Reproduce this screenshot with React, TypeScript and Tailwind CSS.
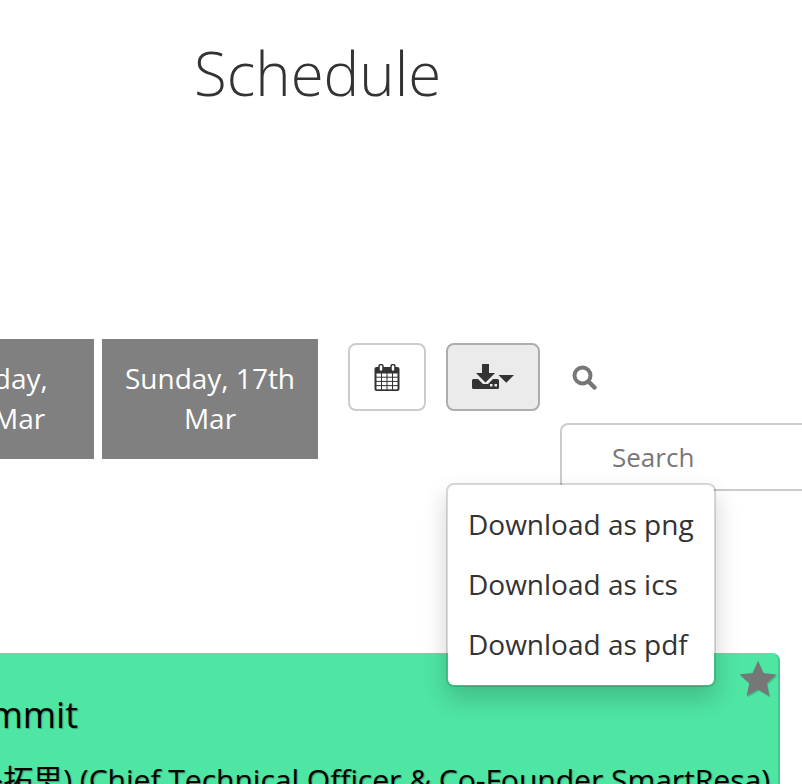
function CalendarIcon() {
    return (
        <svg width="26" height="27" viewBox="0 0 26 27" className="text-[#333]">
            <rect x="0.5" y="3" width="25" height="24" rx="2" fill="currentColor" />
            <rect x="5" y="0.5" width="4" height="7" rx="2" fill="#fff" stroke="currentColor" strokeWidth="1.5" />
            <rect x="17" y="0.5" width="4" height="7" rx="2" fill="#fff" stroke="currentColor" strokeWidth="1.5" />
            <g fill="#fff">
                {[0, 1, 2, 3].map((row) =>
                    [0, 1, 2, 3].map((col) => (
                        <rect key={`${row}-${col}`} x={2.5 + col * 5.5} y={9.5 + row * 4.2} width="4.5" height="3.2" />
                    )),
                )}
            </g>
        </svg>
    );
}

function DownloadIcon() {
    return (
        <svg width="42" height="26" viewBox="0 0 42 26" className="text-[#333]">
            <path d="M10 0h7v9h6l-9.5 9.5L4 9h6z" fill="currentColor" />
            <path d="M0 16.5a1.5 1.5 0 0 1 1.5-1.5H6l5 5h5l5-5h4.5a1.5 1.5 0 0 1 1.5 1.5v7a1.5 1.5 0 0 1-1.5 1.5h-24A1.5 1.5 0 0 1 0 23.5z" fill="currentColor" />
            <rect x="18" y="20" width="2.5" height="2.5" fill="#ebebeb" />
            <rect x="22.5" y="20" width="2.5" height="2.5" fill="#ebebeb" />
            <path d="M26.5 11h15.5l-7.75 7.75z" fill="currentColor" />
        </svg>
    );
}

function SearchIcon() {
    return (
        <svg width="25" height="25" viewBox="0 0 25 25" className="ml-[32px] text-[#777]" fill="none" stroke="currentColor">
            <circle cx="10.5" cy="10.5" r="8" strokeWidth="4" />
            <path d="M16.5 16.5l6 6" strokeWidth="4.5" strokeLinecap="round" />
        </svg>
    );
}

function StarIcon() {
    return (
        <svg width="38" height="37" viewBox="0 0 38 37" className="absolute top-[661px] left-[740px]">
            <path d="M18 0l5.400 12 13 1.400-9.700 8.800 2.700 12.800L18 28.500 6.600 35l2.700-12.800L-.4 13.400l13-1.400z" transform="translate(1 1.500)" fill="#3dbf88" />
            <path d="M18 0l5.400 12 13 1.400-9.700 8.800 2.700 12.800L18 28.500 6.600 35l2.700-12.800L-.4 13.400l13-1.400z" fill="#777" />
        </svg>
    );
}

export default function App() {
    return (
        <div className="relative h-[784px] overflow-hidden bg-white text-[#333]" style={{ fontFamily: "'Open Sans', 'Noto Sans CJK SC', sans-serif" }}>
            {/* Title */}
            <h1 className="pl-[194px] pt-[32px] text-[60px] leading-[82px] font-light">Schedule</h1>

            {/* Day tabs and toolbar */}
            <div className="mt-[225px] ml-[-122px] flex items-start gap-[8px]">
                <div className="flex h-[120px] w-[216px] shrink-0 items-center justify-center bg-[#808080] px-4 pb-[2px] text-center text-[28px] leading-[40px] text-white">
                    Saturday, 16th Mar
                </div>
                <div className="flex h-[120px] w-[216px] shrink-0 items-center justify-center bg-[#808080] px-4 pb-[2px] text-center text-[28px] leading-[40px] text-white">
                    Sunday, 17th Mar
                </div>
                <div className="ml-[22px] shrink-0 pt-[4px]">
                    <div className="flex items-center">
                        <button className="flex h-[68px] w-[78px] items-center justify-center rounded-[8px] border-2 border-[#ccc] bg-white">
                            <CalendarIcon />
                        </button>
                        <button className="ml-[20px] flex h-[68px] w-[94px] items-center justify-center rounded-[8px] border-2 border-[#adadad] bg-[#ebebeb]">
                            <DownloadIcon />
                        </button>
                        <SearchIcon />
                    </div>
                    <div className="mt-[12px] ml-[212px] flex h-[68px] w-[400px] items-center rounded-l-[8px] border-2 border-[#ccc] bg-white pl-[50px] text-[26px] text-[#777]">
                        Search
                    </div>
                </div>
            </div>

            {/* Session card */}
            <div className="mt-[162px] ml-[-400px] h-[200px] w-[1180px] rounded-[8px] border-r-2 border-[#43c78f] bg-[#4fe5a2] text-right text-black [text-shadow:1px_1px_1px_rgba(0,0,0,0.3)]">
                <div className="pt-[37px] pr-[700px] text-[36px] leading-[50px]">Blockchain Summit</div>
                <div className="mt-[20px] pr-[8px] text-[30px] leading-[40px] whitespace-nowrap">
                    朴拓思) (Chief Technical Officer &amp; Co-Founder SmartResa)
                </div>
            </div>
            <StarIcon />

            {/* Download menu */}
            <div className="absolute top-[483px] left-[446px] w-[270px] rounded-[8px] border-2 border-black/15 bg-white bg-clip-padding py-[10px] text-[28px] shadow-[0_12px_24px_rgba(0,0,0,0.175)]">
                <div className="h-[60px] px-[20px] leading-[58px]">Download as png</div>
                <div className="h-[60px] px-[20px] leading-[58px]">Download as ics</div>
                <div className="h-[60px] px-[20px] leading-[58px]">Download as pdf</div>
            </div>
        </div>
    );
}
